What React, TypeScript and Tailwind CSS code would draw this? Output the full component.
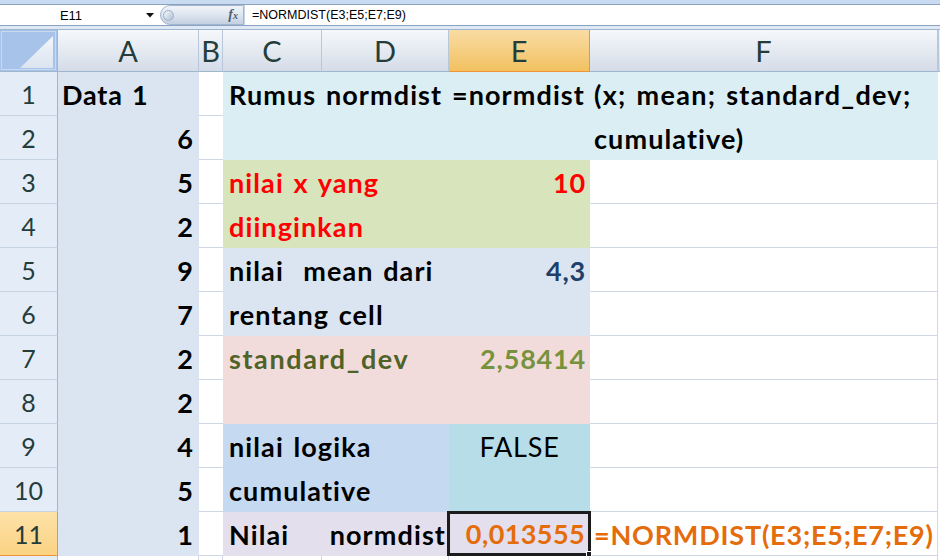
import React from 'react';

function T({ className, children }: { className: string; children?: React.ReactNode }) {
  return (
    <div
      className={`flex items-end pb-[8px] leading-none text-[27px] font-bold [word-spacing:2px] whitespace-pre ${className}`}
    >
      {children}
    </div>
  );
}

function ColHead({ className, label }: { className: string; label: string }) {
  return (
    <div
      className={`row-start-1 flex items-end justify-center pb-[6px] text-[29px] leading-none text-[#243d3b] border-r border-b bg-linear-to-b from-[#f6f8fb] to-[#d4dce8] border-r-[#b8c8da] border-b-[#9eb6ce] ${className}`}
    >
      {label}
    </div>
  );
}

function RowHead({ className, label, active }: { className: string; label: string; active?: boolean }) {
  return (
    <div
      className={`col-start-1 flex items-end justify-center pb-[8px] text-[25px] leading-none text-[#243d3b] border-r border-b ${
        active
          ? 'bg-linear-to-b from-[#fde2a8] to-[#fbd283] border-r-[#f29436] border-b-[#f29436]'
          : 'bg-[#e4ecf7] border-r-[#9eb6ce] border-b-[#c5d3e3]'
      } ${className}`}
    >
      {label}
    </div>
  );
}

export default function App() {
  const aVals = ['6', '5', '2', '9', '7', '2', '2', '4', '5', '1'];
  const aRows = [
    'row-start-3',
    'row-start-4',
    'row-start-5',
    'row-start-6',
    'row-start-7',
    'row-start-8',
    'row-start-9',
    'row-start-10',
    'row-start-11',
    'row-start-12',
  ];
  const bRows = [
    'row-start-2',
    'row-start-3',
    'row-start-4',
    'row-start-5',
    'row-start-6',
    'row-start-7',
    'row-start-8',
    'row-start-9',
    'row-start-10',
    'row-start-11',
    'row-start-12',
  ];
  const fRows = [
    'row-start-4',
    'row-start-5',
    'row-start-6',
    'row-start-7',
    'row-start-8',
    'row-start-9',
    'row-start-10',
    'row-start-11',
    'row-start-12',
  ];
  const r12Cols = ['col-start-2', 'col-start-3', 'col-start-4', 'col-start-5', 'col-start-6', 'col-start-7'];

  return (
    <div className="w-[940px] h-[560px] overflow-hidden bg-white font-['Lato',sans-serif] text-black">
      {/* formula bar */}
      <div className="h-[4px] bg-[#c9dbf0]" />
      <div className="h-[22px] border-y border-[#8ba3c1] bg-white flex items-stretch">
        <div className="w-[160px] flex items-center">
          <span className="w-[142px] text-center text-[13px] leading-none font-['Liberation_Sans',sans-serif]">E11</span>
          <svg width="8" height="5" viewBox="0 0 8 5" className="ml-[4px]">
            <path d="M0 0 H8 L4 4.5 Z" fill="#111" />
          </svg>
        </div>
        <div className="w-[84px] rounded-l-full bg-linear-to-b from-[#f1f4f9] via-[#dde5ef] to-[#c3d0e1] border border-[#a3b6ce] flex items-center justify-between pl-[2px] pr-[5px]">
          <div className="w-[11px] h-[11px] rounded-full bg-linear-to-br from-[#f7f9fc] to-[#aebfd4] border border-[#9db0c8]" />
          <span className="font-['Liberation_Serif',serif] italic font-bold text-[14px] leading-none text-[#4f5f6f]">
            f<span className="text-[10px]">x</span>
          </span>
        </div>
        <div className="flex-1 flex items-center pl-[7px] text-[12.5px] leading-none font-['Liberation_Sans',sans-serif] border-l border-[#c5d2e2]">
          =NORMDIST(E3;E5;E7;E9)
        </div>
      </div>
      <div className="h-[4px] bg-[#dfe8f5] border-b border-[#9eb6ce]" />

      {/* sheet */}
      <div className="grid grid-cols-[58px_141px_24px_99px_127px_141px_348px_2px] grid-rows-[42px_repeat(11,44px)_4px]">
        {/* corner */}
        <div className="col-start-1 row-start-1 bg-[#a8c3e9] border-r border-b border-[#9eb6ce] p-[1px]">
          <div className="w-full h-full border border-[#c8daf1] relative">
            <svg width="56" height="40" viewBox="0 0 56 40" className="block">
              <defs>
                <linearGradient id="tri" x1="0" y1="0" x2="0" y2="1">
                  <stop offset="0" stopColor="#f3f6fb" />
                  <stop offset="1" stopColor="#dbe4f0" />
                </linearGradient>
              </defs>
              <path d="M18 36 L51 4 L51 36 Z" fill="url(#tri)" />
            </svg>
          </div>
        </div>
        <ColHead className="col-start-2" label="A" />
        <ColHead className="col-start-3" label="B" />
        <ColHead className="col-start-4" label="C" />
        <ColHead className="col-start-5" label="D" />
        <div className="col-start-6 row-start-1 flex items-end justify-center pb-[6px] text-[29px] leading-none text-[#243d3b] border-r border-b bg-linear-to-b from-[#f9dca3] to-[#f2c15f] border-[#f29436]">
          E
        </div>
        <ColHead className="col-start-7" label="F" />
        <div className="col-start-8 row-start-1 bg-linear-to-b from-[#f6f8fb] to-[#d4dce8] border-b border-[#9eb6ce] border-l border-l-[#b8c8da]" />

        {/* row headers */}
        <RowHead className="row-start-2" label="1" />
        <RowHead className="row-start-3" label="2" />
        <RowHead className="row-start-4" label="3" />
        <RowHead className="row-start-5" label="4" />
        <RowHead className="row-start-6" label="5" />
        <RowHead className="row-start-7" label="6" />
        <RowHead className="row-start-8" label="7" />
        <RowHead className="row-start-9" label="8" />
        <RowHead className="row-start-10" label="9" />
        <RowHead className="row-start-11" label="10" />
        <RowHead className="row-start-12" label="11" active />
        <div className="col-start-1 row-start-13 bg-[#e4ecf7] border-r border-[#9eb6ce]" />

        {/* fills */}
        <div className="col-start-2 row-start-2 row-span-11 bg-[#dbe5f1]" />
        {bRows.map((r) => (
          <div key={r} className={`col-start-3 border-b border-[#d0d7e5] bg-white ${r}`} />
        ))}
        <div className="col-start-4 col-span-4 row-start-2 row-span-2 bg-[#daeef3]" />
        <div className="col-start-4 col-span-3 row-start-4 row-span-2 bg-[#d8e4bc]" />
        <div className="col-start-4 col-span-3 row-start-6 row-span-2 bg-[#dbe5f1]" />
        <div className="col-start-4 col-span-3 row-start-8 row-span-2 bg-[#f2dcdb]" />
        <div className="col-start-4 col-span-2 row-start-10 row-span-2 bg-[#c5d9f1]" />
        <div className="col-start-6 row-start-10 row-span-2 bg-[#b7dee8]" />
        <div className="col-start-4 col-span-2 row-start-12 bg-[#e4dfec]" />
        {fRows.map((r) => (
          <div key={r} className={`col-start-7 border-r border-b border-[#d0d7e5] bg-white ${r}`} />
        ))}
        {r12Cols.map((c) => (
          <div key={c} className={`row-start-13 border-r border-[#d0d7e5] bg-white ${c}`} />
        ))}

        {/* texts */}
        <T className="col-start-2 row-start-2 pl-[4px] tracking-[0.8px]">Data 1</T>
        {aVals.map((v, i) => (
          <T key={i} className={`col-start-2 justify-end pr-[6px] ${aRows[i]}`}>
            {v}
          </T>
        ))}
        <T className="col-start-4 col-span-3 row-start-2 pl-[6px] tracking-[1.1px]">Rumus normdist =normdist</T>
        <T className="col-start-7 row-start-2 pl-[4px] tracking-[1.3px]">(x; mean; standard_dev;</T>
        <T className="col-start-7 row-start-3 pl-[4px] tracking-[1.1px]">cumulative)</T>

        <T className="col-start-4 col-span-2 row-start-4 pl-[6px] tracking-[1.1px] text-[#ff0000]">nilai x yang</T>
        <T className="col-start-6 row-start-4 justify-end pr-[4px] tracking-[0.8px] text-[#ff0000]">10</T>
        <T className="col-start-4 col-span-2 row-start-5 pl-[6px] tracking-[1.1px] text-[#ff0000]">diinginkan</T>

        <T className="col-start-4 col-span-2 row-start-6 pl-[6px] tracking-[1.1px]">nilai  mean dari</T>
        <T className="col-start-6 row-start-6 justify-end pr-[4px] tracking-[0.8px] text-[#1f3f6b]">4,3</T>
        <T className="col-start-4 col-span-2 row-start-7 pl-[6px] tracking-[1.1px]">rentang cell</T>

        <T className="col-start-4 col-span-2 row-start-8 pl-[6px] tracking-[1.6px] text-[#4f6228]">standard_dev</T>
        <T className="col-start-6 row-start-8 justify-end pr-[4px] tracking-[0.8px] text-[#76923c]">2,58414</T>

        <T className="col-start-4 col-span-2 row-start-10 pl-[6px] tracking-[1.1px]">nilai logika</T>
        <div className="col-start-6 row-start-10 flex items-end justify-center pb-[8px] leading-none text-[27px] tracking-[0.8px] text-black">
          FALSE
        </div>
        <T className="col-start-4 col-span-2 row-start-11 pl-[6px] tracking-[1.1px]">cumulative</T>

        <T className="col-start-4 col-span-2 row-start-12 pl-[6px] pr-[3px] tracking-[1.1px] justify-between">
          <span>Nilai</span>
          <span>normdist</span>
        </T>
        <div className="col-start-6 row-start-12 relative -ml-[2px] -mr-[1px] -mt-[1px] bg-[#e4dfec] border-[3px] border-[#1c1c1c] flex items-end justify-end pr-[3px] pb-[6px] leading-none text-[27px] tracking-[0.4px] font-bold text-[#e46c0a]">
          0,013555
          <div className="absolute -right-[4px] -bottom-[4px] w-[6px] h-[6px] bg-[#1c1c1c] border border-white" />
        </div>
        <T className="col-start-7 row-start-12 pl-[4px] tracking-[0.8px] text-[#e46c0a]">=NORMDIST(E3;E5;E7;E9)</T>
      </div>
    </div>
  );
}
